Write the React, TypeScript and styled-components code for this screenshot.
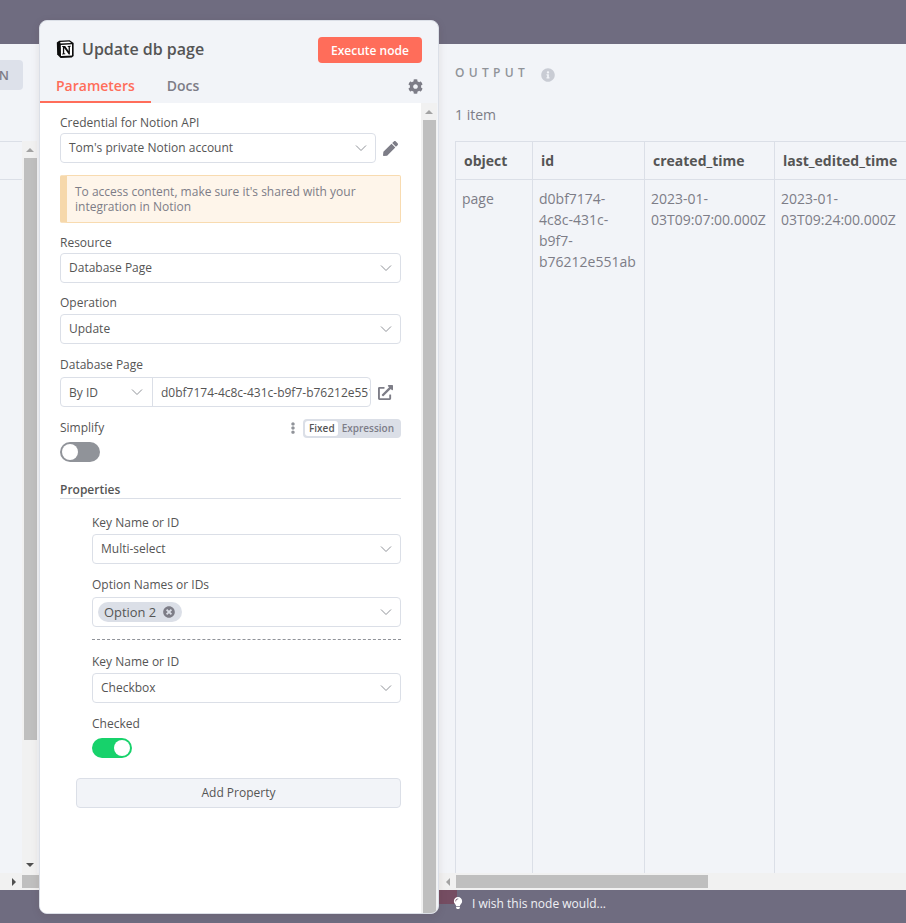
import React from 'react';
import styled, { createGlobalStyle } from 'styled-components';
import { FaPen, FaCog, FaExternalLinkAlt, FaInfoCircle, FaTimesCircle, FaLightbulb, FaEllipsisV } from 'react-icons/fa';

const GlobalStyle = createGlobalStyle`
  html, body { margin: 0; padding: 0; }
  body { font-family: "Open Sans", "Liberation Sans", sans-serif; color: #555; }
  * { box-sizing: border-box; }
`;

const Page = styled.div`
  position: relative;
  width: 906px;
  height: 923px;
  overflow: hidden;
  display: flex;
  flex-direction: column;
  background: #6f6c80;
`;
const TopBand = styled.div`
  height: 44px;
  flex: none;
`;
const Middle = styled.div`
  flex: 1;
  display: flex;
  background: #f2f4f8;
  min-height: 0;
`;
const BottomBand = styled.div`
  height: 33px;
  flex: none;
  display: flex;
  justify-content: flex-start;
  align-items: flex-start;
  padding-left: 439px;
`;
const BlockedCorner = styled.div`
  width: 18px;
  height: 14px;
  background: #754d62;
  flex: none;
`;
const Wish = styled.div`
  display: flex;
  align-items: center;
  gap: 8px;
  height: 26px;
  margin-left: -5px;
  color: #f0f1f5;
  font-size: 12px;
  svg { font-size: 12px; color: #fff; }
`;

const LeftPane = styled.div`
  width: 39px;
  flex: none;
  display: flex;
  flex-direction: column;
  position: relative;
`;
const LeftBody = styled.div`
  flex: 1;
  display: flex;
  min-height: 0;
`;
const LeftContent = styled.div`
  width: 22px;
  flex: none;
  display: flex;
  flex-direction: column;
`;
const RunChip = styled.div`
  margin-top: 16px;
  width: 23px;
  height: 30px;
  background: #dde1ea;
  border-radius: 0 4px 4px 0;
  display: flex;
  align-items: center;
  justify-content: flex-end;
  padding-right: 14px;
  font-size: 13px;
  font-weight: 600;
  color: #7d7d87;
`;
const LeftHead = styled.div`
  margin-top: 51px;
  height: 39px;
  border-top: 1px solid #dbdfe7;
  border-bottom: 1px solid #dbdfe7;
`;

const VBar = styled.div<{ $top?: number }>`
  width: ${p => (p.$top ? 15 : 16)}px;
  flex: none;
  margin-top: ${p => p.$top ?? 0}px;
  background: #f1f1f1;
  display: flex;
  flex-direction: column;
  align-items: flex-start;
`;
const ArrowBox = styled.div`
  height: 17px;
  width: 100%;
  flex: none;
  display: flex;
  align-items: center;
  justify-content: center;
`;
const Thumb = styled.div<{ $h?: number }>`
  width: 13px;
  margin-left: 2px;
  height: ${p => (p.$h ? `${p.$h}px` : 'auto')};
  flex: ${p => (p.$h ? 'none' : 1)};
  background: #bfbfbf;
`;
const Grow = styled.div`
  flex: 1;
`;
const Arrow = styled.span<{ $dir: 'up' | 'down' | 'left' | 'right'; $dark?: boolean }>`
  width: 0;
  height: 0;
  border: 4px solid transparent;
  ${p => {
    const color = p.$dark ? '#505050' : '#a3a3a3';
    if (p.$dir === 'up') return `border-top-width: 0; border-bottom: 4px solid ${color};`;
    if (p.$dir === 'down') return `border-bottom-width: 0; border-top: 4px solid ${color};`;
    if (p.$dir === 'left') return `border-left-width: 0; border-right: 4px solid ${color};`;
    return `border-right-width: 0; border-left: 4px solid ${color};`;
  }}
`;
const HBar = styled.div`
  height: 17px;
  flex: none;
  background: #f1f1f1;
  display: flex;
  align-items: stretch;
`;
const HArrow = styled.div<{ $w: number; $pad?: number }>`
  width: ${p => p.$w}px;
  padding-left: ${p => p.$pad ?? 0}px;
  flex: none;
  display: flex;
  align-items: center;
  justify-content: center;
`;
const HThumb = styled.div<{ $w: number }>`
  width: ${p => p.$w}px;
  flex: none;
  background: #bfbfbf;
  margin: 2px 0;
`;

const OutputPane = styled.div`
  flex: 1;
  min-width: 0;
  margin-left: 400px;
  display: flex;
  flex-direction: column;
`;
const OutputInner = styled.div`
  flex: 1;
  min-height: 0;
  padding: 20px 0 0 16px;
  display: flex;
  flex-direction: column;
`;
const OutputTitle = styled.div`
  display: flex;
  align-items: center;
  gap: 12px;
  height: 17px;
  font-size: 12px;
  font-weight: 600;
  letter-spacing: 4.3px;
  color: #909399;
  svg { font-size: 14px; color: #c9ccd4; margin-top: 5px; }
`;
const ItemCount = styled.div`
  margin-top: 24px;
  font-size: 14px;
  line-height: 19px;
  color: #7d7d87;
`;
const Table = styled.table`
  margin-top: 17px;
  flex: 1;
  border-collapse: collapse;
  table-layout: fixed;
  width: 460px;
  height: 732px;
  font-size: 14px;
  color: #7d7d87;
`;
const Th = styled.th<{ $w: number }>`
  width: ${p => p.$w}px;
  height: 38px;
  padding: 0 8px;
  text-align: left;
  font-weight: 700;
  color: #555;
  white-space: nowrap;
  border: 1px solid #dbdfe7;
`;
const Td = styled.td`
  padding: 8px 6px;
  vertical-align: top;
  line-height: 21px;
  border: 1px solid #dbdfe7;
  border-bottom: 0;
  overflow-wrap: break-word;
`;

const Modal = styled.div`
  position: absolute;
  left: 39px;
  top: 20px;
  width: 400px;
  height: 894px;
  background: #f2f4f8;
  border: 1px solid #dbdfe7;
  border-radius: 8px;
  overflow: hidden;
  display: flex;
  flex-direction: column;
  box-shadow: 0 2px 8px rgba(68, 28, 23, 0.1);
`;
const ModalHeader = styled.div`
  height: 58px;
  flex: none;
  display: flex;
  align-items: center;
  justify-content: space-between;
  padding: 0 16px;
`;
const TitleWrap = styled.div`
  display: flex;
  align-items: center;
  gap: 8px;
  font-size: 16px;
  font-weight: 600;
  color: #555;
  margin-top: -2px;
`;
const ExecuteButton = styled.button`
  width: 104px;
  height: 26px;
  border: 0;
  border-radius: 4px;
  background: #ff6d5a;
  color: #fff;
  font: 600 12px "Open Sans", sans-serif;
  padding: 0;
`;
const TabRow = styled.div`
  height: 24px;
  flex: none;
  display: flex;
  align-items: flex-start;
  position: relative;
`;
const Tab = styled.div<{ $active?: boolean }>`
  height: 24px;
  padding: 0 16px;
  font-size: 14px;
  line-height: 14px;
  font-weight: 600;
  color: ${p => (p.$active ? '#ff6d5a' : '#7d7d87')};
  border-bottom: ${p => (p.$active ? '2px solid #ff6d5a' : '0')};
`;
const TabSettings = styled.div`
  margin-left: auto;
  margin-right: 15px;
  font-size: 15px;
  line-height: 15px;
  color: #7d7d87;
`;
const ModalBody = styled.div`
  flex: 1;
  min-height: 0;
  display: flex;
`;
const Form = styled.div`
  width: 381px;
  flex: none;
  background: #fff;
  padding: 12px 20px 0;
  display: flex;
  flex-direction: column;
`;
const Label = styled.div<{ $mt?: number; $mb?: number }>`
  font-size: 12px;
  line-height: 16px;
  height: 16px;
  margin-top: ${p => p.$mt ?? 0}px;
  margin-bottom: ${p => p.$mb ?? 3}px;
  color: #555;
`;
const Row = styled.div`
  display: flex;
  align-items: center;
  gap: 7px;
`;
const Select = styled.div<{ $grow?: boolean; $pad?: number }>`
  height: 30px;
  flex: ${p => (p.$grow ? 1 : 'none')};
  display: flex;
  align-items: center;
  justify-content: space-between;
  padding: 0 8px 1px ${p => p.$pad ?? 8}px;
  background: #fff;
  border: 1px solid #dbdfe7;
  border-radius: 4px;
  font-size: 12px;
  color: #555;
`;
const Chevron = () => (
  <svg width="12" height="12" viewBox="0 0 12 12" fill="none" stroke="#909399" strokeWidth="1">
    <path d="M1 3.5 L6 8.5 L11 3.5" />
  </svg>
);
const IconSlot = styled.div<{ $w: number }>`
  width: ${p => p.$w}px;
  flex: none;
  display: flex;
  justify-content: flex-start;
  color: #7d7d87;
  font-size: 15px;
`;
const Notice = styled.div`
  margin-top: 12px;
  height: 48px;
  padding: 8px 10px 0 8px;
  background: #fef5ea;
  border: 1px solid #f8dbb0;
  border-left: 7px solid #f6d8ab;
  border-radius: 2px;
  font-size: 12px;
  line-height: 15px;
  color: #7d7d87;
`;
const JoinedField = styled.div`
  flex: 1;
  min-width: 0;
  height: 30px;
  display: flex;
  border: 1px solid #dbdfe7;
  border-radius: 4px;
  font-size: 12px;
`;
const JoinedSelect = styled.div`
  width: 92px;
  flex: none;
  display: flex;
  align-items: center;
  justify-content: space-between;
  padding: 0 9px 0 8px;
  border-right: 1px solid #dbdfe7;
  color: #555;
`;
const JoinedInput = styled.div`
  flex: 1;
  min-width: 0;
  overflow: hidden;
  white-space: nowrap;
  padding: 6px 0 0 8px;
  color: #555;
`;
const SimplifyRow = styled.div`
  margin-top: 12px;
  height: 19px;
  display: flex;
  align-items: center;
`;
const SimplifyLabel = styled.div`
  font-size: 12px;
  color: #555;
  flex: 1;
  align-self: flex-start;
`;
const Dots = styled.div`
  font-size: 12px;
  line-height: 12px;
  color: #909399;
  margin-right: 4px;
`;
const ModeToggle = styled.div`
  height: 19px;
  width: 98px;
  display: flex;
  align-items: center;
  padding: 0 2px;
  background: #dbdfe7;
  border-radius: 4px;
  font-size: 10px;
  font-weight: 600;
`;
const ModeOption = styled.div<{ $active?: boolean }>`
  height: 15px;
  line-height: 15px;
  padding: 0 3px 0 4px;
  border-radius: 3px;
  color: ${p => (p.$active ? '#555' : '#7d7d87')};
  background: ${p => (p.$active ? '#fff' : 'transparent')};
`;
const Switch = styled.div<{ $on?: boolean }>`
  width: 40px;
  height: 20px;
  flex: none;
  margin-top: ${p => (p.$on ? 3 : 4)}px;
  border-radius: 10px;
  padding: 2px;
  display: flex;
  justify-content: ${p => (p.$on ? 'flex-end' : 'flex-start')};
  background: ${p => (p.$on ? '#17d26b' : '#909399')};
  &::after {
    content: '';
    width: 16px;
    height: 16px;
    border-radius: 50%;
    background: #fff;
  }
`;
const SectionTitle = styled.div`
  margin-top: 20px;
  height: 17px;
  font-size: 12px;
  line-height: 16px;
  font-weight: 600;
  color: #555;
  border-bottom: 1px solid #dbdfe7;
`;
const Collection = styled.div`
  margin-top: 16px;
  padding-left: 32px;
  display: flex;
  flex-direction: column;
`;
const Tag = styled.div`
  display: flex;
  align-items: center;
  gap: 7px;
  width: 84px;
  height: 20px;
  padding: 0 6px;
  background: #dbdfe7;
  border-radius: 10px;
  font-size: 12.9px;
  white-space: nowrap;
  color: #555;
  svg { font-size: 12px; flex: none; color: #7d7d87; }
`;
const DashedRule = styled.div`
  margin: 12px 0 14px;
  border-top: 1px dashed #909399;
`;
const AddButton = styled.button`
  margin: 20px 0 0 16px;
  height: 30px;
  width: 325px;
  flex: none;
  border: 1px solid #dbdfe7;
  border-radius: 4px;
  background: #f2f4f8;
  color: #555;
  font: 400 12px "Open Sans", sans-serif;
  padding: 0 0 1px;
`;

const NotionLogo = () => (
  <svg width="18" height="18" viewBox="0 0 18 18">
    <path d="M3.2 0.8 L13.6 0.2 L17.6 3 L17.6 16 L15.8 17.4 L4.6 17.9 L1.2 14.6 L0.8 2.4 Z" fill="#0c0c0c" />
    <path d="M4.2 2 L13.2 1.4 L15.2 2.9 L4.6 3.5 Z" fill="#fff" />
    <path d="M4.8 5 L16 4.3 L16 15.4 L5 16 Z" fill="#fff" />
    <path d="M6.2 6 L9.2 5.9 L12.6 11 L12.6 7 L11.6 6.8 L11.6 6 L14.8 5.8 L14.8 6.6 L13.9 6.8 L13.9 14.4 L12.8 14.5 L8.2 8 L8.2 13.2 L9.3 13.5 L9.3 14.3 L6.1 14.5 L6.1 13.7 L6.9 13.4 L6.9 7 L6.2 6.9 Z" fill="#0c0c0c" />
  </svg>
);

export default function App() {
  return (
    <>
      <GlobalStyle />
      <Page>
        <TopBand />
        <Middle>
          <LeftPane>
            <LeftBody>
              <LeftContent>
                <RunChip>N</RunChip>
                <LeftHead />
              </LeftContent>
              <VBar $top={97}>
                <ArrowBox><Arrow $dir="up" /></ArrowBox>
                <Thumb $h={582} />
                <Grow />
                <ArrowBox><Arrow $dir="down" $dark /></ArrowBox>
              </VBar>
            </LeftBody>
            <HBar>
              <HArrow $w={22} $pad={6}><Arrow $dir="right" $dark /></HArrow>
              <HThumb $w={17} />
            </HBar>
          </LeftPane>
          <OutputPane>
            <OutputInner>
              <OutputTitle>OUTPUT <FaInfoCircle /></OutputTitle>
              <ItemCount>1 item</ItemCount>
              <Table>
                <thead>
                  <tr>
                    <Th $w={77}>object</Th>
                    <Th $w={112}>id</Th>
                    <Th $w={130}>created_time</Th>
                    <Th $w={141}>last_edited_time</Th>
                  </tr>
                </thead>
                <tbody>
                  <tr>
                    <Td>page</Td>
                    <Td>d0bf7174-4c8c-431c-b9f7-b76212e551ab</Td>
                    <Td>2023-01-03T09:07:00.000Z</Td>
                    <Td>2023-01-03T09:24:00.000Z</Td>
                  </tr>
                </tbody>
              </Table>
            </OutputInner>
            <HBar>
              <HArrow $w={17}><Arrow $dir="left" /></HArrow>
              <HThumb $w={252} />
            </HBar>
          </OutputPane>
        </Middle>
        <BottomBand>
          <BlockedCorner />
          <Wish><FaLightbulb /> I wish this node would...</Wish>
        </BottomBand>

        <Modal>
          <ModalHeader>
            <TitleWrap><NotionLogo /> Update db page</TitleWrap>
            <ExecuteButton>Execute node</ExecuteButton>
          </ModalHeader>
          <TabRow>
            <Tab $active>Parameters</Tab>
            <Tab>Docs</Tab>
            <TabSettings><FaCog /></TabSettings>
          </TabRow>
          <ModalBody>
            <Form>
              <Label $mb={2}>Credential for Notion API</Label>
              <Row>
                <Select $grow>Tom's private Notion account <Chevron /></Select>
                <IconSlot $w={18}><FaPen /></IconSlot>
              </Row>
              <Notice>To access content, make sure it's shared with your integration in Notion</Notice>

              <Label $mt={12} $mb={2}>Resource</Label>
              <Select>Database Page <Chevron /></Select>
              <Label $mt={12}>Operation</Label>
              <Select>Update <Chevron /></Select>
              <Label $mt={13} $mb={4}>Database Page</Label>
              <Row>
                <JoinedField>
                  <JoinedSelect>By ID <Chevron /></JoinedSelect>
                  <JoinedInput>d0bf7174-4c8c-431c-b9f7-b76212e551ab</JoinedInput>
                </JoinedField>
                <IconSlot $w={23}><FaExternalLinkAlt /></IconSlot>
              </Row>

              <SimplifyRow>
                <SimplifyLabel>Simplify</SimplifyLabel>
                <Dots><FaEllipsisV /></Dots>
                <ModeToggle>
                  <ModeOption $active>Fixed</ModeOption>
                  <ModeOption>Expression</ModeOption>
                </ModeToggle>
              </SimplifyRow>
              <Switch />

              <SectionTitle>Properties</SectionTitle>
              <Collection>
                <Label>Key Name or ID</Label>
                <Select>Multi-select <Chevron /></Select>
                <Label $mt={13} $mb={4}>Option Names or IDs</Label>
                <Select $pad={5}>
                  <Tag>Option 2 <FaTimesCircle /></Tag>
                  <Chevron />
                </Select>
                <DashedRule />
                <Label>Key Name or ID</Label>
                <Select>Checkbox <Chevron /></Select>
                <Label $mt={13}>Checked</Label>
                <Switch $on />
              </Collection>
              <AddButton>Add Property</AddButton>
            </Form>
            <VBar>
              <ArrowBox><Arrow $dir="up" /></ArrowBox>
              <Thumb />
            </VBar>
          </ModalBody>
        </Modal>
      </Page>
    </>
  );
}
